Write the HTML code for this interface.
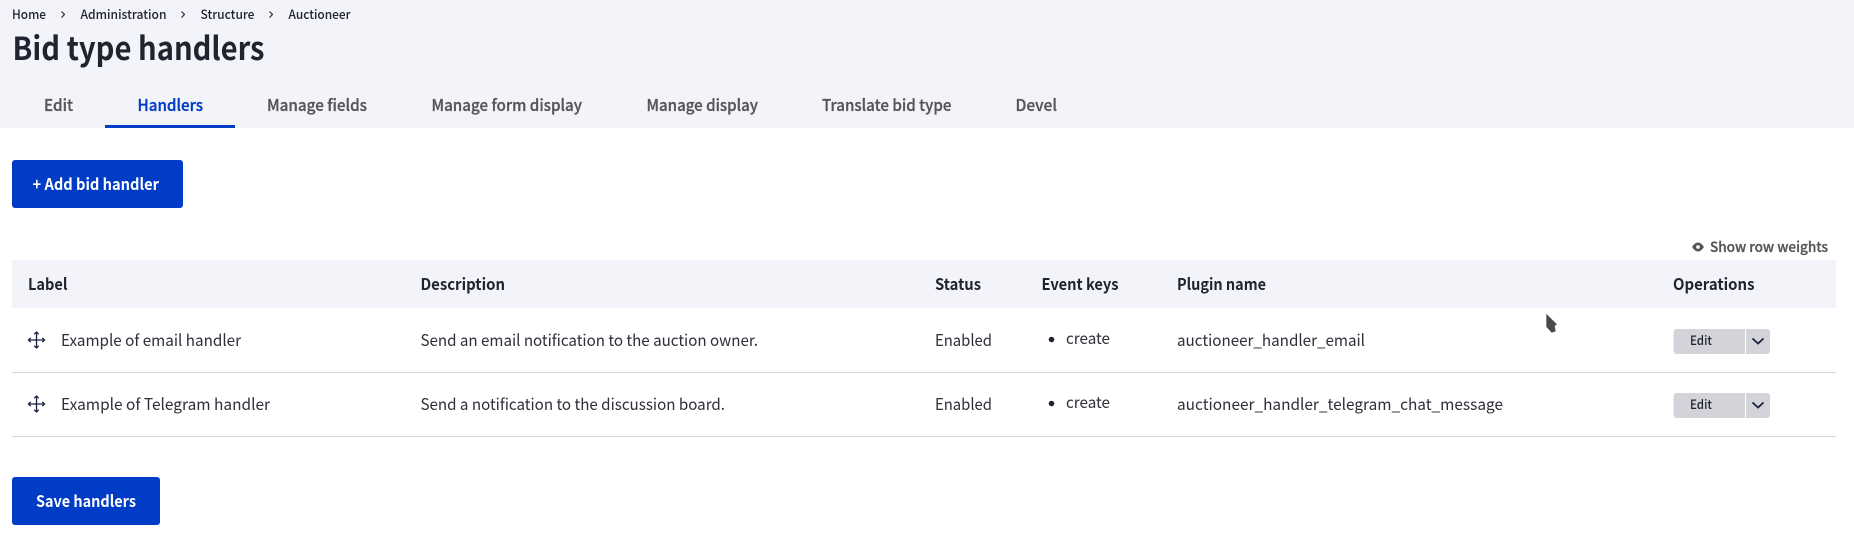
<!DOCTYPE html>
<html lang="en">
<head>
<meta charset="utf-8">
<title>Bid type handlers</title>
<style>
html,body{margin:0;padding:0;background:#fff;width:1854px;height:554px;overflow:hidden}
svg{display:block}
text{font-family:"Noto Sans CJK JP","Liberation Sans",sans-serif;fill:#222330;font-size:16px;white-space:pre}
.b{font-size:12.8px;font-weight:500}
.h{font-weight:700}
.t{font-weight:500;fill:#55565b;stroke:#55565b;stroke-width:.3px}
.w{font-weight:700;fill:#fff}
.r{fill:#2e2f3a;font-weight:400}
</style>
</head>
<body>
<svg xmlns="http://www.w3.org/2000/svg" width="1854" height="554" viewBox="0 0 1854 554">
<rect width="1854" height="128" fill="#f3f4f9"/>
<text class="b" x="12" y="19" textLength="34" lengthAdjust="spacingAndGlyphs">Home</text>
<path d="M61.5 11.5l3 3-3 3" fill="none" stroke="#222330" stroke-width="1.1"/>
<text class="b" x="80.5" y="19" textLength="86" lengthAdjust="spacingAndGlyphs">Administration</text>
<path d="M181.5 11.5l3 3-3 3" fill="none" stroke="#222330" stroke-width="1.1"/>
<text class="b" x="200.5" y="19" textLength="54" lengthAdjust="spacingAndGlyphs">Structure</text>
<path d="M269.5 11.5l3 3-3 3" fill="none" stroke="#222330" stroke-width="1.1"/>
<text class="b" x="288.5" y="19" textLength="62" lengthAdjust="spacingAndGlyphs">Auctioneer</text>
<text x="12.5" y="60" style="font-size:32px;font-weight:700" textLength="252" lengthAdjust="spacingAndGlyphs">Bid type handlers</text>
<text class="t" x="44" y="111" textLength="29" lengthAdjust="spacingAndGlyphs">Edit</text>
<text class="t" x="137.5" y="111" textLength="65.5" lengthAdjust="spacingAndGlyphs" style="fill:#003cc5;stroke:#003cc5">Handlers</text>
<rect x="105" y="125" width="130" height="3" fill="#003cc5"/>
<text class="t" x="267" y="111" textLength="100" lengthAdjust="spacingAndGlyphs">Manage fields</text>
<text class="t" x="431.500" y="111" textLength="150.500" lengthAdjust="spacingAndGlyphs">Manage form display</text>
<text class="t" x="646.500" y="111" textLength="111.500" lengthAdjust="spacingAndGlyphs">Manage display</text>
<text class="t" x="822" y="111" textLength="129.500" lengthAdjust="spacingAndGlyphs">Translate bid type</text>
<text class="t" x="1015.500" y="111" textLength="41.500" lengthAdjust="spacingAndGlyphs">Devel</text>

<rect x="12" y="160" width="171" height="48" rx="3" fill="#003cc5"/>
<text class="w" x="32.500" y="190" textLength="126.500" lengthAdjust="spacingAndGlyphs">+ Add bid handler</text>

<path d="M1692 247c2-3 4-4.500 6-4.500s4 1.500 6 4.500c-2 3-4 4.500-6 4.500s-4-1.500-6-4.500z" fill="#55565b"/>
<circle cx="1698" cy="247" r="1.900" fill="#f3f4f9"/>
<text x="1710" y="252" style="font-size:14px;font-weight:500;fill:#55565b;stroke:#55565b;stroke-width:.3px" textLength="118" lengthAdjust="spacingAndGlyphs">Show row weights</text>

<rect x="12" y="260" width="1824" height="48" fill="#f3f4f9"/>
<text class="h" x="28" y="290" textLength="39.500" lengthAdjust="spacingAndGlyphs">Label</text>
<text class="h" x="420.500" y="290" textLength="84.500" lengthAdjust="spacingAndGlyphs">Description</text>
<text class="h" x="935" y="290" textLength="46" lengthAdjust="spacingAndGlyphs">Status</text>
<text class="h" x="1041.500" y="290" textLength="77" lengthAdjust="spacingAndGlyphs">Event keys</text>
<text class="h" x="1177" y="290" textLength="89" lengthAdjust="spacingAndGlyphs">Plugin name</text>
<text class="h" x="1673" y="290" textLength="81.500" lengthAdjust="spacingAndGlyphs">Operations</text>

<rect x="12" y="372" width="1824" height="1" fill="#d3d4d9"/>
<rect x="12" y="436" width="1824" height="1" fill="#d3d4d9"/>

<g fill="none" stroke="#1b2140" stroke-width="1.300">
<path d="M36.500 332v16M28.500 340h16"/>
<path d="M34.300 334.200l2.200-2.200 2.200 2.200M34.300 345.800l2.200 2.200 2.200-2.200M30.700 337.800l-2.200 2.200 2.200 2.200M42.300 337.800l2.200 2.200-2.200 2.200"/>
<path d="M36.500 396v16M28.500 404h16"/>
<path d="M34.300 398.200l2.200-2.200 2.200 2.200M34.300 409.800l2.200 2.200 2.200-2.200M30.700 401.800l-2.200 2.200 2.200 2.200M42.300 401.800l2.200 2.200-2.200 2.200"/>
</g>

<text class="r" x="61" y="346" textLength="180" lengthAdjust="spacingAndGlyphs">Example of email handler</text>
<text class="r" x="420.500" y="346" textLength="337.500" lengthAdjust="spacingAndGlyphs">Send an email notification to the auction owner.</text>
<text class="r" x="935" y="346" textLength="57" lengthAdjust="spacingAndGlyphs">Enabled</text>
<circle cx="1051.500" cy="339.500" r="2.800" fill="#222330"/>
<text class="r" x="1066" y="344" textLength="44" lengthAdjust="spacingAndGlyphs">create</text>
<text class="r" x="1177" y="346" textLength="188" lengthAdjust="spacingAndGlyphs">auctioneer_handler_email</text>

<text class="r" x="61" y="410" textLength="209" lengthAdjust="spacingAndGlyphs">Example of Telegram handler</text>
<text class="r" x="420.500" y="410" textLength="304.500" lengthAdjust="spacingAndGlyphs">Send a notification to the discussion board.</text>
<text class="r" x="935" y="410" textLength="57" lengthAdjust="spacingAndGlyphs">Enabled</text>
<circle cx="1051.500" cy="403.500" r="2.800" fill="#222330"/>
<text class="r" x="1066" y="408" textLength="44" lengthAdjust="spacingAndGlyphs">create</text>
<text class="r" x="1177" y="410" textLength="326" lengthAdjust="spacingAndGlyphs">auctioneer_handler_telegram_chat_message</text>

<rect x="1673.500" y="329" width="96.500" height="25" rx="3" fill="#d3d4d9"/>
<rect x="1745" y="329" width="1" height="25" fill="#fff"/>
<text x="1690" y="345" style="font-size:12.800px;font-weight:500" textLength="22" lengthAdjust="spacingAndGlyphs">Edit</text>
<path d="M1752.500 338.500l5.500 5 5.500-5" fill="none" stroke="#1b2140" stroke-width="1.800"/>

<rect x="1673.500" y="393" width="96.500" height="25" rx="3" fill="#d3d4d9"/>
<rect x="1745" y="393" width="1" height="25" fill="#fff"/>
<text x="1690" y="409" style="font-size:12.800px;font-weight:500" textLength="22" lengthAdjust="spacingAndGlyphs">Edit</text>
<path d="M1752.500 402.500l5.500 5 5.500-5" fill="none" stroke="#1b2140" stroke-width="1.800"/>

<rect x="12" y="477" width="148" height="48" rx="3" fill="#003cc5"/>
<text class="w" x="36" y="507" textLength="100" lengthAdjust="spacingAndGlyphs">Save handlers</text>

<path d="M1546 313l11.500 11.500-2.500 1.500 1 5.500-4.500 1.500-5.500-6z" fill="#4a4a4d" stroke="#fff" stroke-width=".6"/>
</svg>
</body>
</html>
